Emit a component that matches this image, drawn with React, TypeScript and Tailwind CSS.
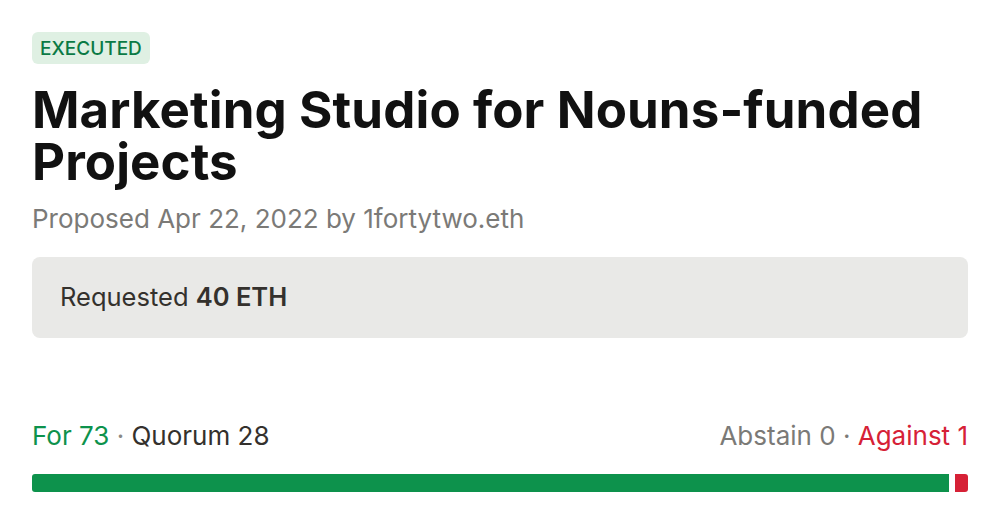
export default function App() {
  return (
    <div className="w-[1000px] h-[525px] bg-white px-8 pt-8 font-['Inter',sans-serif]">
      <div className="inline-flex h-8 items-center rounded-md bg-[#dff0e3] px-2 text-[19px] font-medium leading-none text-[#0b7a45]">
        EXECUTED
      </div>
      <h1 className="mt-[20px] text-[51px] font-bold leading-[52px] tracking-[0.002em] text-[#111111]">
        Marketing Studio for Nouns-funded Projects
      </h1>
      <p className="mt-[13px] text-[26px] leading-[36px] text-[#7b7a77]">
        Proposed Apr 22, 2022 by 1fortytwo.eth
      </p>
      <div className="mt-[20px] flex h-[81px] items-center rounded-lg bg-[#e9e9e7] px-7 text-[25.5px] text-[#34312d]">
        Requested&nbsp;<span className="font-semibold">40 ETH</span>
      </div>
      <div className="mt-20 flex items-center justify-between text-[26px] leading-[36px]">
        <div>
          <span className="text-[#0d924c]">For 73</span>
          <span className="text-[#8a8985]"> · </span>
          <span className="text-[#34312d]">Quorum 28</span>
        </div>
        <div>
          <span className="text-[#7b7a77]">Abstain 0</span>
          <span className="text-[#7b7a77]"> · </span>
          <span className="text-[#d62136]">Against 1</span>
        </div>
      </div>
      <div className="mt-5 flex h-[18px] gap-1.5">
        <div className="rounded-l-[3px] bg-[#0d924c]" style={{ flexGrow: 73 }} />
        <div className="rounded-r-[3px] bg-[#d62136]" style={{ flexGrow: 1 }} />
      </div>
    </div>
  );
}
